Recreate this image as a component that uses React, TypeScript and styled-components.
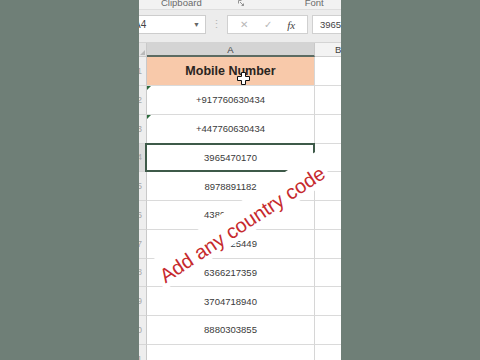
import React from "react";
import styled, { createGlobalStyle } from "styled-components";

const GlobalStyle = createGlobalStyle`
  html, body { margin: 0; padding: 0; background: #6f7f77; overflow: hidden; }
  * { box-sizing: border-box; }
`;

const Page = styled.div`
  display: flex;
  justify-content: center;
  height: 360px;
  width: 480px;
`;

const Sheet = styled.div`
  position: relative;
  width: 202px;
  height: 360px;
  overflow: hidden;
  background: #ffffff;
  font-family: "Liberation Sans", Arial, sans-serif;
  display: flex;
  flex-direction: column;
`;

const RibbonLabels = styled.div`
  height: 10px;
  flex: none;
  background: #f2f2f2;
  border-bottom: 1px solid #dedede;
  display: flex;
  align-items: flex-end;
  overflow: hidden;
  font-size: 9.5px;
  line-height: 10px;
  color: #6a6a6a;
  padding-bottom: 1px;
`;

const GroupLabel = styled.span<{ $ml: number }>`
  margin-left: ${(p) => p.$ml}px;
  white-space: nowrap;
`;

const Launcher = styled.svg<{ $ml: number }>`
  margin-left: ${(p) => p.$ml}px;
  flex: none;
  margin-bottom: 2px;
`;

const FormulaRow = styled.div`
  height: 33px;
  flex: none;
  background: #ececec;
  border-bottom: 1px solid #d4d4d4;
  display: flex;
  align-items: flex-start;
  padding-top: 5px;
`;

const NameBox = styled.div`
  width: 67px;
  height: 19px;
  background: #ffffff;
  border: 1px solid #cdcdcd;
  border-left: none;
  display: flex;
  align-items: center;
  justify-content: space-between;
  padding-right: 5px;
  overflow: hidden;
  font-size: 10px;
  color: #444;
`;

const NameText = styled.span`
  margin-left: -5px;
`;

const Caret = styled.span`
  font-size: 7px;
  color: #666;
`;

const Dots = styled.div`
  width: 21px;
  height: 19px;
  display: flex;
  align-items: center;
  justify-content: center;
  color: #b5b5b5;
  font-size: 11px;
`;

const FxBox = styled.div`
  width: 81px;
  height: 19px;
  background: #ffffff;
  border: 1px solid #d0d0d0;
  display: flex;
  align-items: center;
  justify-content: space-around;
  padding: 0 4px;
`;

const FxGlyph = styled.span<{ $c: string }>`
  color: ${(p) => p.$c};
  font-size: 10px;
`;

const FxText = styled.span`
  font-family: "Liberation Serif", serif;
  font-style: italic;
  font-size: 11px;
  color: #444;
`;

const FormulaInput = styled.div`
  flex: 1;
  margin-left: 4px;
  height: 19px;
  background: #ffffff;
  border: 1px solid #d0d0d0;
  border-right: none;
  display: flex;
  align-items: center;
  padding-left: 7px;
  font-size: 9.5px;
  color: #444;
  white-space: nowrap;
  overflow: hidden;
`;

const GridRow = styled.div<{ $h: number }>`
  display: grid;
  grid-template-columns: 8px 168px 1fr;
  height: ${(p) => p.$h}px;
  flex: none;
`;

const Corner = styled.div`
  background: #e4e4e4;
  border-right: 1px solid #c9c9c9;
  border-bottom: 1px solid #c9c9c9;
  position: relative;
  &::after {
    content: "";
    position: absolute;
    right: 1px;
    bottom: 1px;
    border-left: 5px solid transparent;
    border-bottom: 5px solid #b9b9b9;
  }
`;

const ColHead = styled.div<{ $sel?: boolean; $pl?: number }>`
  background: ${(p) => (p.$sel ? "#d4d4d4" : "#f3f3f3")};
  border-right: 1px solid #c9c9c9;
  border-bottom: ${(p) => (p.$sel ? "2px solid #5c6b62" : "1px solid #cfcfcf")};
  display: flex;
  align-items: center;
  justify-content: ${(p) => (p.$pl ? "flex-start" : "center")};
  padding-left: ${(p) => p.$pl ?? 0}px;
  font-size: 9.5px;
  color: #444;
`;

const RowHead = styled.div<{ $sel?: boolean }>`
  background: ${(p) => (p.$sel ? "#dcdcdc" : "#eeeeee")};
  border-right: 1px solid #c9c9c9;
  border-bottom: 1px solid #d6d6d6;
  display: flex;
  align-items: center;
  justify-content: flex-end;
  padding-right: 4px;
  overflow: hidden;
  font-size: 9px;
  color: #a8a8a8;
`;

const Cell = styled.div<{ $header?: boolean; $sel?: boolean; $flag?: boolean }>`
  position: relative;
  background: ${(p) => (p.$header ? "#f8c9aa" : "#ffffff")};
  border-right: 1px solid #d6d6d6;
  border-bottom: 1px solid #dadada;
  display: flex;
  align-items: center;
  justify-content: center;
  font-size: ${(p) => (p.$header ? "12.5px" : "9.5px")};
  font-weight: ${(p) => (p.$header ? 700 : 400)};
  color: ${(p) => (p.$header ? "#2a2420" : "#3a3a3a")};
  &::before {
    content: "";
    display: ${(p) => (p.$flag ? "block" : "none")};
    position: absolute;
    left: 0;
    top: 0;
    border-top: 4px solid #2c6a3c;
    border-right: 4px solid transparent;
  }
  &::after {
    content: "";
    display: ${(p) => (p.$sel ? "block" : "none")};
    position: absolute;
    left: -2px;
    top: -1px;
    right: -1px;
    bottom: -1px;
    border: 2px solid #3e5a49;
  }
`;

const BlankCell = styled.div`
  border-bottom: 1px solid #dadada;
`;

const Overlay = styled.div`
  position: absolute;
  left: 101px;
  top: 220.5px;
  transform: translate(-50%, -50%) rotate(-33.5deg);
  background: #ffffff;
  color: #c62a2d;
  font-family: "Liberation Sans", Arial, sans-serif;
  font-size: 20px;
  line-height: 24px;
  padding: 8px 4px 0;
  white-space: nowrap;
`;

const Cursor = styled.svg`
  position: absolute;
  left: 98px;
  top: 72px;
`;

const rows: { n: number; v: string; flag?: boolean; sel?: boolean }[] = [
  { n: 2, v: "+917760630434", flag: true },
  { n: 3, v: "+447760630434", flag: true },
  { n: 4, v: "3965470170", sel: true },
  { n: 5, v: "8978891182" },
  { n: 6, v: "4389125449" },
  { n: 7, v: "7789125449" },
  { n: 8, v: "6366217359" },
  { n: 9, v: "3704718940" },
  { n: 10, v: "8880303855" },
  { n: 11, v: "" },
];

export default function App() {
  return (
    <>
      <GlobalStyle />
      <Page>
        <Sheet>
          <RibbonLabels>
            <GroupLabel $ml={22}>Clipboard</GroupLabel>
            <Launcher $ml={36} width="6" height="6" viewBox="0 0 6 6">
              <path d="M0.5 0.5h3M0.5 0.5v3M2 2l3.5 3.5M5.5 3.5v2h-2" stroke="#888" strokeWidth="0.9" fill="none" />
            </Launcher>
            <GroupLabel $ml={61}>Font</GroupLabel>
          </RibbonLabels>
          <FormulaRow>
            <NameBox>
              <NameText>A4</NameText>
              <Caret>▼</Caret>
            </NameBox>
            <Dots>⋮</Dots>
            <FxBox>
              <FxGlyph $c="#b8b8b8">✕</FxGlyph>
              <FxGlyph $c="#b8b8b8">✓</FxGlyph>
              <FxText>fx</FxText>
            </FxBox>
            <FormulaInput>3965470170</FormulaInput>
          </FormulaRow>
          <GridRow $h={14}>
            <Corner />
            <ColHead $sel>A</ColHead>
            <ColHead $pl={20}>B</ColHead>
          </GridRow>
          <GridRow $h={29}>
            <RowHead>1</RowHead>
            <Cell $header>Mobile Number</Cell>
            <BlankCell />
          </GridRow>
          {rows.map((r) => (
            <GridRow $h={28.75} key={r.n}>
              <RowHead $sel={r.sel}>{r.n}</RowHead>
              <Cell $flag={r.flag} $sel={r.sel}>
                {r.v}
              </Cell>
              <BlankCell />
            </GridRow>
          ))}
          <Overlay>Add any country code</Overlay>
          <Cursor width="13" height="13" viewBox="0 0 13 13">
            <path
              d="M4.5 0.5h4v4h4v4h-4v4h-4v-4h-4v-4h4z"
              fill="#ffffff"
              stroke="#111"
              strokeWidth="1"
            />
          </Cursor>
        </Sheet>
      </Page>
    </>
  );
}
